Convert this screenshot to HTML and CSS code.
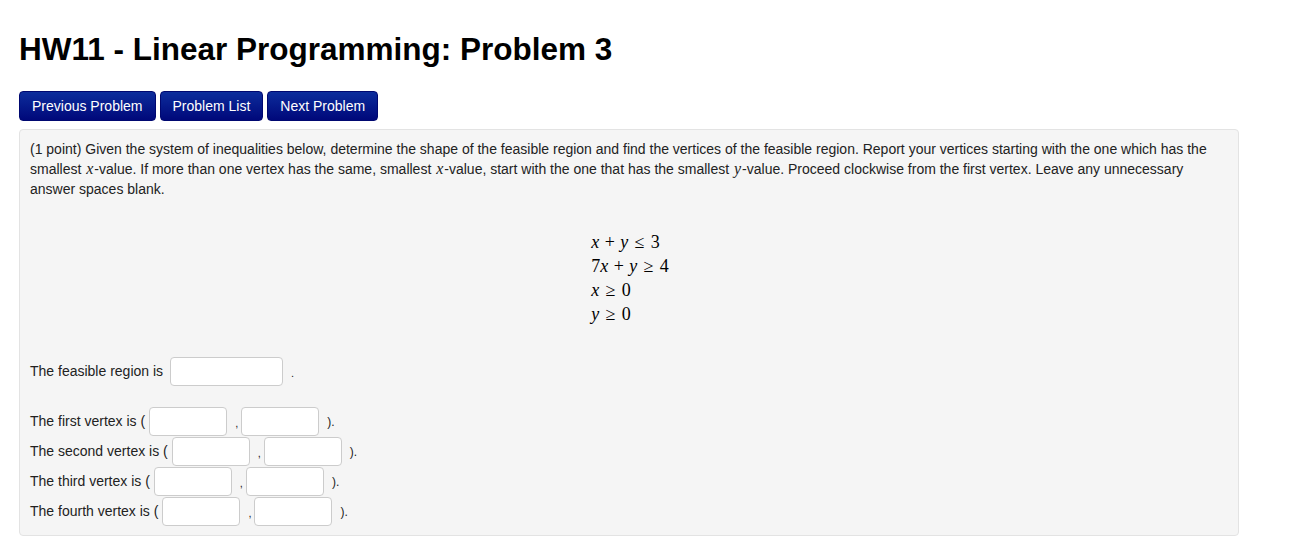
FILE: index.html
```html
<!DOCTYPE html>
<html>
<head>
<meta charset="utf-8">
<link rel="stylesheet" href="styles.css">
</head>
<body>
<div class="page">
  <h1 class="title">HW11 - Linear Programming: Problem 3</h1>
  <div class="nav">
    <span class="btn">Previous Problem</span>
    <span class="btn">Problem List</span>
    <span class="btn">Next Problem</span>
  </div>
  <div class="well">
    <p class="intro">(1 point) Given the system of inequalities below, determine the shape of the feasible region and find the vertices of the feasible region. Report your vertices starting with the one which has the smallest <i class="mv">x</i>-value. If more than one vertex has the same, smallest <i class="mv">x</i>-value, start with the one that has the smallest <i class="mv">y</i>-value. Proceed clockwise from the first vertex. Leave any unnecessary answer spaces blank.</p>
    <div class="math">
      <div class="math-lines">
        <div class="ml"><i>x</i><span class="op">+</span><i>y</i><span class="rel">≤</span>3</div>
        <div class="ml">7<i>x</i><span class="op">+</span><i>y</i><span class="rel">≥</span>4</div>
        <div class="ml"><i>x</i><span class="rel">≥</span>0</div>
        <div class="ml"><i>y</i><span class="rel">≥</span>0</div>
      </div>
    </div>
    <div class="row region">
      <span class="lbl">The feasible region is</span>
      <span class="field wide"></span>
      <span class="dot">.</span>
    </div>
    <div class="vertices">
      <div class="row"><span class="lbl">The first vertex is (</span><span class="field"></span><span class="comma">,</span><span class="field second"></span><span class="close">).</span></div>
      <div class="row"><span class="lbl">The second vertex is (</span><span class="field"></span><span class="comma">,</span><span class="field second"></span><span class="close">).</span></div>
      <div class="row"><span class="lbl">The third vertex is (</span><span class="field"></span><span class="comma">,</span><span class="field second"></span><span class="close">).</span></div>
      <div class="row"><span class="lbl">The fourth vertex is (</span><span class="field"></span><span class="comma">,</span><span class="field second"></span><span class="close">).</span></div>
    </div>
  </div>
</div>
</body>
</html>
```

FILE: styles.css
```css
html, body {
  margin: 0;
  padding: 0;
  background: #ffffff;
}
body {
  font-family: "Liberation Sans", Arial, sans-serif;
  font-size: 14px;
  color: #222;
}
.page {
  width: 1220px;
  padding-left: 19px;
}
.title {
  margin: 31px 0 0 0;
  font-size: 31.5px;
  line-height: 36px;
  font-weight: bold;
  color: #000;
}
.nav {
  margin-top: 24px;
  display: flex;
  gap: 4px;
}
.btn {
  display: inline-flex;
  align-items: center;
  height: 30px;
  box-sizing: border-box;
  padding: 0 12px;
  border: 1px solid #000870;
  border-radius: 4px;
  background: linear-gradient(to bottom, #0c2d9c, #00087a);
  color: #fff;
  font-size: 14px;
}
.well {
  margin-top: 8px;
  box-sizing: border-box;
  width: 1220px;
  padding: 9px 10px;
  background: #f5f5f5;
  border: 1px solid #e3e3e3;
  border-radius: 4px;
}
.intro {
  margin: 0;
  line-height: 20px;
}
.mv {
  font-family: "Liberation Serif", "Times New Roman", serif;
  font-size: 16px;
  line-height: 12px;
  margin: 0 1px 0 1px;
}
.math {
  margin-top: 31px;
  display: flex;
  justify-content: center;
}
.math-lines {
  font-family: "Liberation Serif", "Times New Roman", serif;
  font-size: 18px;
  color: #000;
  padding-left: 2px;
}
.ml {
  height: 24px;
  line-height: 24px;
}
.op {
  margin: 0 0.3em;
}
.rel {
  margin: 0 0.35em;
}
.row {
  display: flex;
  align-items: center;
  height: 29px;
  color: #222;
}
.lbl {
  padding-bottom: 2px;
}
.region {
  margin-top: 31px;
}
.vertices {
  margin-top: 21px;
  display: flex;
  flex-direction: column;
  gap: 1px;
}
.field {
  display: block;
  box-sizing: border-box;
  width: 78px;
  height: 29px;
  margin-left: 4px;
  background: #fff;
  border: 1px solid #cccccc;
  border-radius: 4px;
}
.field.wide {
  width: 113px;
  margin-left: 7px;
}
.field.second {
  margin-left: 3px;
}
.comma {
  margin-left: 8px;
  font-size: 11px;
  padding-top: 3px;
}
.close {
  margin-left: 8px;
  font-size: 12px;
}
.dot {
  margin-left: 8px;
  font-size: 11px;
  padding-top: 3px;
}
```
